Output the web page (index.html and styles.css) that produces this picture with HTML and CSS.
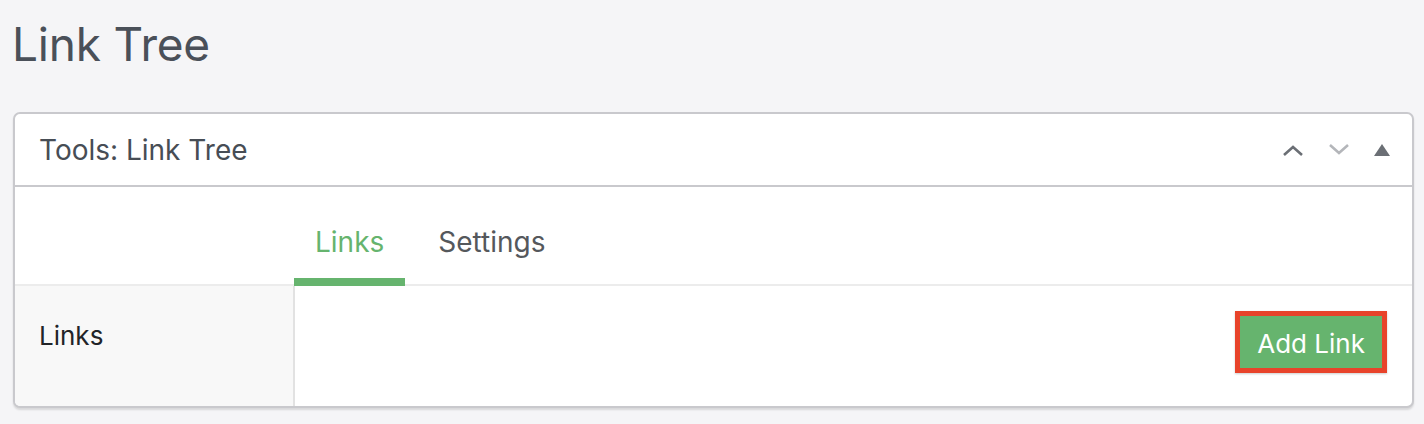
FILE: index.html
```html
<!DOCTYPE html>
<html>
<head>
<meta charset="utf-8">
<link rel="stylesheet" href="styles.css">
</head>
<body>
<h1 class="page-title">Link Tree</h1>
<div class="card">
  <div class="card-header">
    <div class="card-title">Tools: Link Tree</div>
    <div class="card-actions">
      <svg class="ic ic-up" width="22" height="12" viewBox="0 0 22 12"><path d="M2 11 L11 3 L20 11" fill="none" stroke="#6b6f75" stroke-width="2.6"/></svg>
      <svg class="ic ic-down" width="22" height="12" viewBox="0 0 22 12"><path d="M2 1 L11 9 L20 1" fill="none" stroke="#b4b6ba" stroke-width="2.6"/></svg>
      <svg class="ic ic-tri" width="16" height="12" viewBox="0 0 16 12"><path d="M8 0 L16 12 L0 12 Z" fill="#6b6f75"/></svg>
    </div>
  </div>
  <div class="tabs-row">
    <div class="tabs-spacer"></div>
    <div class="tabs">
      <div class="tab active">Links</div>
      <div class="tab">Settings</div>
    </div>
  </div>
  <div class="card-body">
    <div class="side">
      <div class="side-item">Links</div>
    </div>
    <div class="main">
      <button class="btn-add">Add Link</button>
    </div>
  </div>
</div>
</body>
</html>
```
FILE: styles.css
```css
html, body {
  margin: 0;
  padding: 0;
}
body {
  background: #f5f5f7;
  font-family: Inter, "Noto Sans", sans-serif;
  color: #474d55;
  width: 1424px;
  height: 424px;
  overflow: hidden;
}
.page-title {
  margin: 0;
  padding: 16px 0 0 12px;
  font-size: 46px;
  font-weight: 400;
  line-height: 56px;
  color: #4a5059;
  letter-spacing: -0.2px;
}
.card {
  margin: 40px 10px 0 13px;
  background: #fff;
  border: 2px solid #c9c9cd;
  border-radius: 7px;
  box-shadow: 0 2px 2px rgba(0,0,0,0.12);
  overflow: hidden;
}
.card-header {
  height: 71px;
  border-bottom: 2px solid #c9c9cd;
  display: flex;
  align-items: center;
  justify-content: space-between;
  padding: 0 22px 0 24px;
}
.card-title {
  font-size: 28px;
  color: #474d55;
}
.card-actions {
  display: flex;
  align-items: center;
  gap: 24px;
}
.tabs-row {
  display: flex;
  height: 97px;
  border-bottom: 2px solid #ececec;
}
.tabs-spacer {
  width: 279px;
}
.tabs {
  display: flex;
  align-items: stretch;
  gap: 12px;
}
.tab {
  font-size: 28px;
  color: #55585c;
  padding: 38px 21px 0 21px;
  box-sizing: border-box;
  margin-bottom: -2px;
  border-bottom: 8px solid transparent;
}
.tab.active {
  color: #66b46e;
  border-bottom-color: #66b46e;
}
.card-body {
  display: flex;
  height: 120px;
}
.side {
  background: #f8f8f8;
  border-right: 2px solid #e2e2e2;
  padding: 34px 0 0 24px;
  box-sizing: border-box;
  width: 280px;
}
.side-item {
  font-size: 26px;
  color: #222428;
}
.main {
  flex: 1;
  display: flex;
  justify-content: flex-end;
  align-items: flex-start;
  padding: 25px 25px 0 0;
}
.btn-add {
  font-family: Inter, "Noto Sans", sans-serif;
  font-size: 26px;
  color: #fff;
  background: #66b46e;
  border: 5px solid #e8432a;
  padding: 3px 17px 0;
  height: 62px;
  box-shadow: 0 1px 2px rgba(0,0,0,0.2);
}
```
